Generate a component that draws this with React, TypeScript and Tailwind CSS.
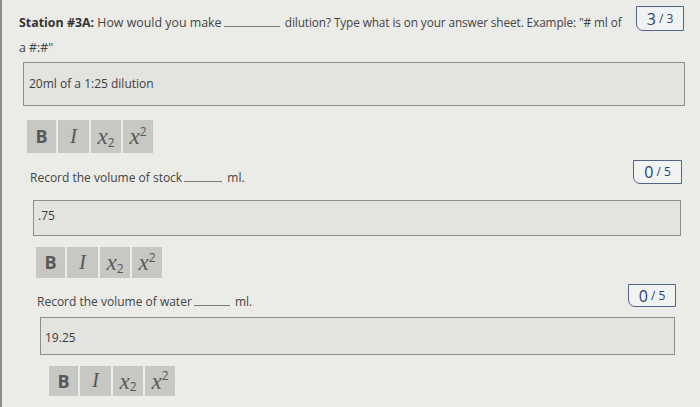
import React from 'react';

const font = { fontFamily: '"Open Sans", "Liberation Sans", sans-serif' };
const serif = { fontFamily: '"Liberation Serif", "DejaVu Serif", serif' };

function Badge({ earned, total, className }: { earned: string; total: string; className: string }) {
  return (
    <div
      className={`flex items-center justify-center border-[1.5px] border-[#51648a] bg-[#f1f2f2] rounded-bl-[7px] text-[#2d4372] ${className}`}
    >
      <span className="text-[16px] leading-none">{earned}</span>
      <span className="text-[12px] leading-none ml-[3px]">/ {total}</span>
    </div>
  );
}

function Toolbar({ className, h }: { className: string; h: string }) {
  const btn = `flex items-center justify-center bg-[#c7c7c4] text-[#585858] ${h}`;
  return (
    <div className={`flex gap-[2px] ${className}`}>
      <div className={`${btn} w-[29px] text-[18px] font-bold`} style={font}>B</div>
      <div className={`${btn} w-[31px] text-[21px] italic`} style={serif}>I</div>
      <div className={`${btn} w-[30px]`}>
        <span className="text-[23px] italic leading-none" style={serif}>x</span>
        <span className="text-[12px] leading-none mt-[12px]" style={font}>2</span>
      </div>
      <div className={`${btn} w-[30px]`}>
        <span className="text-[23px] italic leading-none" style={serif}>x</span>
        <span className="text-[12px] leading-none -mt-[10px]" style={font}>2</span>
      </div>
    </div>
  );
}

function Blank({ w }: { w: string }) {
  return <span className={`inline-block ${w} mx-[2px] border-b border-[#7a7a7a] h-[13px] align-baseline`} />;
}

export default function App() {
  return (
    <div className="w-[700px] h-[407px] bg-[#ebebe7] border-l-2 border-[#8c8c8a] overflow-hidden text-[#444] text-[12px]" style={font}>
      {/* Question header */}
      <div className="flex pt-[10px]">
        <div className="w-[634px] pl-[17px] leading-[25px] whitespace-nowrap text-[12.4px]">
          <span className="font-bold text-[#333]">Station #3A:</span> How would you make
          <Blank w="w-[56px]" />{' '}
          <span className="text-[11.8px] tracking-[-0.1px]">dilution? Type what is on your answer sheet. Example: "# ml of</span>
          <br />a #:#"
        </div>
        <Badge earned="3" total="3" className="w-[48px] h-[25px] -mt-[4px]" />
      </div>

      {/* Answer 1 */}
      <div className="ml-[21px] mt-[2px] w-[662px] h-[44px] bg-[#e3e3df] border-[1.5px] border-[#8e8e8e] pl-[5px] pt-[12px] leading-[18px] text-[#3d3d3d]">
        20ml of a 1:25 dilution
      </div>
      <Toolbar className="ml-[25px] mt-[14px]" h="h-[33px]" />

      {/* Stock volume */}
      <div className="flex mt-[7px] w-[680px]">
        <div className="pl-[28px] pt-[9px] leading-[18px] flex-1 whitespace-nowrap">
          Record the volume of stock<Blank w="w-[38px]" /> ml.
        </div>
        <Badge earned="0" total="5" className="w-[49px] h-[24px]" />
      </div>
      <div className="ml-[31px] mt-[13px] w-[648px] h-[36px] bg-[#e3e3df] border-[1.5px] border-[#8e8e8e] pl-[4px] pt-[6px] leading-[18px] text-[#3d3d3d]">
        .75
      </div>
      <Toolbar className="ml-[34px] mt-[11px]" h="h-[31px]" />

      {/* Water volume */}
      <div className="flex mt-[6px] w-[674px]">
        <div className="pl-[35px] pt-[9px] leading-[18px] flex-1 whitespace-nowrap">
          Record the volume of water<Blank w="w-[36px]" /> ml.
        </div>
        <Badge earned="0" total="5" className="w-[48px] h-[23px]" />
      </div>
      <div className="ml-[38px] mt-[6px] w-[635px] h-[38px] bg-[#e3e3df] border-[1.5px] border-[#8e8e8e] pl-[4px] pt-[11px] leading-[18px] text-[#3d3d3d]">
        19.25
      </div>
      <Toolbar className="ml-[47px] mt-[11px]" h="h-[30px]" />
    </div>
  );
}
